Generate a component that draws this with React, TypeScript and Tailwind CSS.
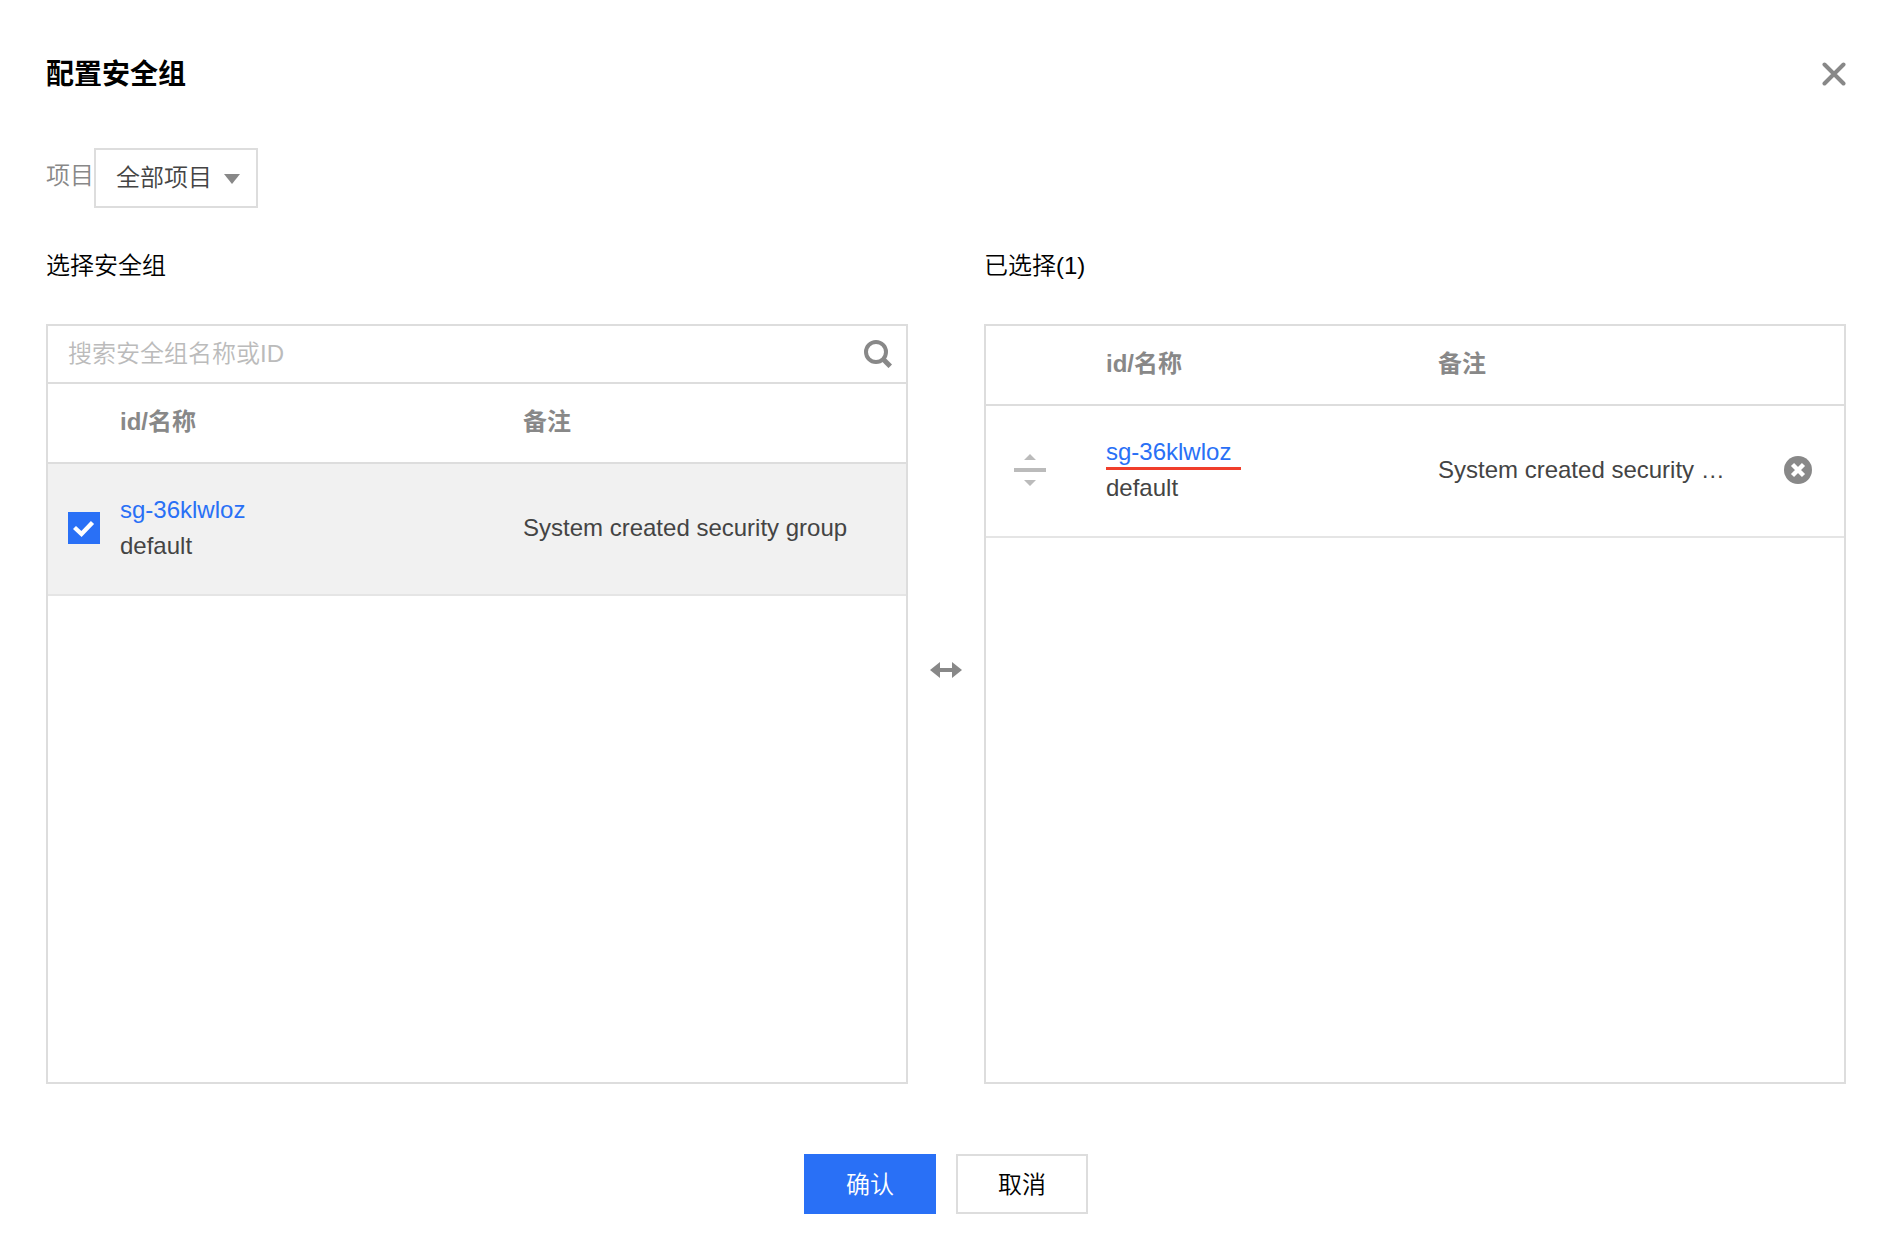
import { useState, type ReactNode } from "react";

const group = {
  id: "sg-36klwloz",
  name: "default",
  remark: "System created security group",
  shortRemark: "System created security …",
};

function CloseIcon() {
  return (
    <svg width="24" height="24" viewBox="0 0 24 24" aria-hidden="true">
      <path d="M2.5 2.5 21.5 21.5M21.5 2.5 2.5 21.5" stroke="#888" strokeWidth="4" strokeLinecap="round" />
    </svg>
  );
}

function SearchIcon() {
  return (
    <svg width="28" height="28" viewBox="0 0 28 28" fill="none" aria-hidden="true">
      <circle cx="12" cy="12" r="10" stroke="#888" strokeWidth="4" />
      <path d="M19 19 26.3 26.3" stroke="#888" strokeWidth="5" />
    </svg>
  );
}

function DragIcon() {
  return (
    <svg width="32" height="32" viewBox="0 0 32 32" fill="#bbb" aria-hidden="true">
      <path d="M10 6 16 0 22 6ZM0 14H32V18H0ZM10 26H22L16 32Z" />
    </svg>
  );
}

function RemoveIcon() {
  return (
    <svg width="28" height="28" viewBox="0 0 28 28" aria-hidden="true">
      <circle cx="14" cy="14" r="14" fill="#888" />
      <path d="M8.5 8.5 19.5 19.5M19.5 8.5 8.5 19.5" stroke="#fff" strokeWidth="4.4" />
    </svg>
  );
}

function TransferIcon() {
  return (
    <svg width="32" height="16" viewBox="0 0 32 16" fill="#888" aria-hidden="true">
      <path d="M0 8 10 0V6H22V0L32 8 22 16V10H10V16Z" />
    </svg>
  );
}

function HeaderCell({ children }: { children?: ReactNode }) {
  return (
    <th scope="col" className="h-20 border-b-2 border-[#ddd] pb-0.5 pl-5 text-left font-bold text-[#888]">
      {children}
    </th>
  );
}

function GroupName({ marked = false }: { marked?: boolean }) {
  return (
    <>
      <a href="#group" className="relative inline-block text-[#2970f6]">
        {group.id}
        {marked && <span className="absolute -right-2.5 bottom-0 left-0 h-[3px] bg-[#f03e2b]" />}
      </a>
      <div>{group.name}</div>
    </>
  );
}

export default function App() {
  const [checked, setChecked] = useState(true);

  return (
    <main
      role="dialog"
      aria-labelledby="title"
      className="flex min-h-screen flex-col bg-white px-[46px] pt-14 pb-11 font-['Liberation_Sans','Noto_Sans_CJK_SC',sans-serif] text-2xl leading-9 font-[350] text-[#444]"
    >
      <header className="flex items-center justify-between">
        <h1 id="title" className="pt-0.5 text-[28px] leading-[34px] font-bold text-black">配置安全组</h1>
        <button type="button" aria-label="关闭"><CloseIcon /></button>
      </header>

      <div className="mt-14 flex items-center">
        <label htmlFor="project" className="pb-1 text-[#888]">项目</label>
        <div className="relative">
          <select id="project" className="h-[60px] w-[164px] appearance-none border-2 border-[#ddd] bg-white pl-5">
            <option>全部项目</option>
          </select>
          <svg width="16" height="10" viewBox="0 0 16 10" fill="#888" className="pointer-events-none absolute top-[26px] right-[18px]" aria-hidden="true">
            <path d="M0 0H16L8 10Z" />
          </svg>
        </div>
      </div>

      <div className="mt-10 flex flex-1">
        <section className="flex min-w-0 flex-1 flex-col">
          <h2 className="text-black">选择安全组</h2>
          <div className="mt-10 flex-1 border-2 border-[#ddd]">
            <div className="flex h-[58px] items-center border-b-2 border-[#ddd] pr-3.5 pl-5">
              <input
                type="search"
                aria-label="搜索安全组"
                placeholder="搜索安全组名称或ID"
                className="min-w-0 flex-1 outline-none placeholder:text-[#bbb]"
              />
              <button type="button" aria-label="搜索"><SearchIcon /></button>
            </div>
            <table className="w-full table-fixed border-separate border-spacing-0">
              <colgroup>
                <col className="w-[52px]" />
                <col />
                <col />
              </colgroup>
              <thead>
                <tr>
                  <HeaderCell />
                  <HeaderCell>id/名称</HeaderCell>
                  <HeaderCell>备注</HeaderCell>
                </tr>
              </thead>
              <tbody>
                <tr className="bg-[#f1f1f1]">
                  <td className="h-[132px] border-b-2 border-[#e5e5e5] pb-0.5 pl-5">
                    <span className="relative block size-8">
                      <input
                        type="checkbox"
                        aria-label={group.id}
                        checked={checked}
                        onChange={() => setChecked(!checked)}
                        className="block size-8 appearance-none border-2 border-[#ddd] bg-white checked:border-[#2970f6] checked:bg-[#2970f6]"
                      />
                      <svg viewBox="0 0 32 32" fill="none" className="pointer-events-none absolute inset-0" aria-hidden="true">
                        <path d="M6.5 15.5 13.5 22 24.5 10.5" stroke="#fff" strokeWidth="4.4" />
                      </svg>
                    </span>
                  </td>
                  <td className="border-b-2 border-[#e5e5e5] pb-0.5 pl-5"><GroupName /></td>
                  <td className="truncate border-b-2 border-[#e5e5e5] px-5 pb-0.5">{group.remark}</td>
                </tr>
              </tbody>
            </table>
          </div>
        </section>

        <div className="flex w-[76px] items-center justify-center pt-2">
          <TransferIcon />
        </div>

        <section className="flex min-w-0 flex-1 flex-col">
          <h2 className="text-black">已选择(1)</h2>
          <div className="mt-10 flex-1 border-2 border-[#ddd]">
            <table className="w-full table-fixed border-separate border-spacing-0">
              <colgroup>
                <col className="w-[100px]" />
                <col />
                <col />
                <col className="w-[94px]" />
              </colgroup>
              <thead>
                <tr>
                  <HeaderCell />
                  <HeaderCell>id/名称</HeaderCell>
                  <HeaderCell>备注</HeaderCell>
                  <HeaderCell />
                </tr>
              </thead>
              <tbody>
                <tr>
                  <td className="h-[132px] border-b-2 border-[#e5e5e5] pb-0.5 pl-7">
                    <button type="button" aria-label="拖动排序" className="block"><DragIcon /></button>
                  </td>
                  <td className="border-b-2 border-[#e5e5e5] pb-0.5 pl-5"><GroupName marked /></td>
                  <td title={group.remark} className="truncate border-b-2 border-[#e5e5e5] px-5 pb-0.5">{group.shortRemark}</td>
                  <td className="border-b-2 border-[#e5e5e5] pr-8 pb-0.5">
                    <button type="button" aria-label="移除" className="ml-auto block"><RemoveIcon /></button>
                  </td>
                </tr>
              </tbody>
            </table>
          </div>
        </section>
      </div>

      <footer className="mt-[70px] flex justify-center gap-5">
        <button type="button" className="h-[60px] w-[132px] border-2 border-[#2970f6] bg-[#2970f6] pt-0.5 text-white">确认</button>
        <button type="button" className="h-[60px] w-[132px] border-2 border-[#ddd] bg-white pt-0.5 text-black">取消</button>
      </footer>
    </main>
  );
}
